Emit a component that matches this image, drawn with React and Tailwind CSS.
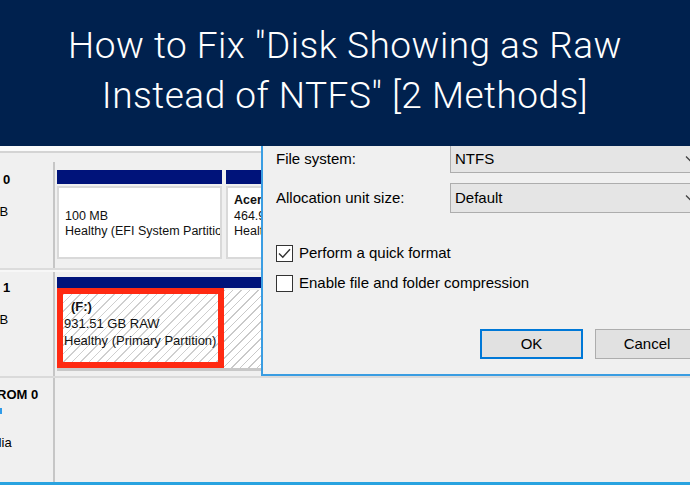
const hatch =
  "bg-[repeating-linear-gradient(135deg,#c9c9c9_0px,#c9c9c9_1px,#ffffff_1px,#ffffff_6px)]";

function DiskLabel({ lines, pt = 10 }) {
  return (
    <div
      className="w-[55px] shrink-0 overflow-hidden border-r-2 border-[#c6c6c6] bg-[#f0f0f0] text-[13px] leading-[16px] text-black"
      style={{ paddingTop: pt }}
    >
      {lines.map((l, i) => (
        <div
          key={i}
          className={`whitespace-nowrap ${l.bold ? "font-bold" : ""}`}
          style={{ marginLeft: l.ml }}
        >
          {l.text || "\u00a0"}
        </div>
      ))}
    </div>
  );
}

function Partition({ width, lines, extra = "" }) {
  return (
    <div className="flex flex-col shrink-0" style={{ width }}>
      <div className="h-[14px] bg-[#00137a]" />
      <div
        className={`mt-[2px] h-[73px] border-2 border-[#d9d9d9] bg-white pl-[6px] pt-[5px] text-[12.5px] leading-[15.5px] text-[#111] whitespace-nowrap overflow-hidden ${extra}`}
      >
        {lines.map((l, i) => (
          <div key={i} className={l.bold ? "font-bold" : ""}>
            {l.text || "\u00a0"}
          </div>
        ))}
      </div>
    </div>
  );
}

function DiskPane() {
  return (
    <div className="w-[261px] shrink-0 overflow-hidden flex flex-col bg-[#f0f0f0]">
      <div className="h-[5px] bg-[#fbfbfb]" />
      <div className="h-[2px] bg-[#d4d4d4]" />
      <div className="h-[9px] bg-[#f0f0f0]" />

      {/* Disk 0 */}
      <div className="flex h-[106px]">
        <DiskLabel
          lines={[
            { text: "Disk 0", bold: true, ml: -28 },
            { text: "Basic", ml: -45 },
            { text: "465.76 GB", ml: -54 },
            { text: "Online", ml: -60 },
          ]}
        />
        <div className="flex gap-[4px] pl-[2px] pt-[8px]">
          <Partition
            width={165}
            lines={[
              { text: "" },
              { text: "100 MB" },
              { text: "Healthy (EFI System Partition)" },
            ]}
          />
          <Partition
            width={80}
            lines={[
              { text: "Acer (C:)", bold: true },
              { text: "464.95 GB NTFS" },
              { text: "Healthy (Boot, Page File)" },
            ]}
          />
        </div>
      </div>

      <div className="h-[2px] bg-[#dcdcdc]" />
      <div className="h-[2px] bg-[#f7f7f7]" />

      {/* Disk 1 */}
      <div className="flex flex-1">
        <DiskLabel
          pt={8}
          lines={[
            { text: "Disk 1", bold: true, ml: -28 },
            { text: "Basic", ml: -45 },
            { text: "931.51 GB", ml: -54 },
            { text: "Online", ml: -60 },
          ]}
        />
        <div className="flex flex-col pl-[2px] pt-[5px] w-[206px]">
          <div className="h-[11px] bg-[#00137a]" />
          <div className="flex h-[80px]">
            <div className="w-[167px] shrink-0 border-[6px] border-[#ff2a12] bg-[repeating-linear-gradient(135deg,#cfcfcf_0px,#cfcfcf_1px,#ffffff_1px,#ffffff_6px)] pl-[1px] pt-[4px] text-[13px] leading-[17px] text-[#111] whitespace-nowrap overflow-hidden">
              <div className="pl-[7px] font-bold">(F:)</div>
              <div>931.51 GB RAW</div>
              <div>Healthy (Primary Partition)</div>
            </div>
            <div className={`flex-1 mt-[2px] ${hatch}`} />
          </div>
          <div className="h-[3px] bg-[#c8c8c8]" />
        </div>
      </div>
    </div>
  );
}

function Chevron() {
  return (
    <svg width="12" height="8" viewBox="0 0 12 8" className="shrink-0">
      <path d="M1 1.5 L6 6.5 L11 1.5" fill="none" stroke="#444" strokeWidth="1.3" />
    </svg>
  );
}

function Select({ value, h, top = true }) {
  return (
    <div
      className={`flex-1 mr-[-14px] flex items-center justify-between bg-[#e5e5e5] border border-[#adadad] pl-[4px] pr-[6px] text-[15px] text-black ${
        top ? "" : "border-t-0"
      }`}
      style={{ height: h }}
    >
      <span>{value}</span>
      <Chevron />
    </div>
  );
}

function Checkbox({ checked, label }) {
  return (
    <div className="flex items-center gap-[6px] h-[17px]">
      <div className="w-[17px] h-[17px] border border-[#333] bg-white flex items-center justify-center">
        {checked && (
          <svg width="13" height="11" viewBox="0 0 13 11">
            <path d="M1 5.5 L4.8 9.2 L12 1.2" fill="none" stroke="#333" strokeWidth="1.4" />
          </svg>
        )}
      </div>
      <span className="text-[15px] text-black">{label}</span>
    </div>
  );
}

function FormatDialog() {
  return (
    <div className="flex-1 overflow-hidden border-l-2 border-b-2 border-[#3a9de2] bg-[#f0f0f0] flex flex-col pl-[13px]">
      <div className="flex items-center">
        <div className="w-[174px] text-[15px] text-black">File system:</div>
        <Select value="NTFS" h={27} top={false} />
      </div>
      <div className="flex items-center mt-[10px]">
        <div className="w-[174px] text-[15px] text-black">Allocation unit size:</div>
        <Select value="Default" h={30} />
      </div>
      <div className="mt-[32px] flex flex-col gap-[13px]">
        <Checkbox checked label="Perform a quick format" />
        <Checkbox label="Enable file and folder compression" />
      </div>
      <div className="mt-[37px] flex gap-[12px] pl-[204px]">
        <button className="w-[103px] h-[30px] shrink-0 border-2 border-[#0078d7] bg-[#e1e1e1] text-[15px] text-black">
          OK
        </button>
        <button className="w-[104px] h-[30px] shrink-0 border border-[#adadad] bg-[#e1e1e1] text-[15px] text-black">
          Cancel
        </button>
      </div>
    </div>
  );
}

export default function App() {
  return (
    <div className="w-[690px] h-[485px] overflow-hidden bg-[#f0f0f0] flex flex-col font-['Liberation_Sans',Arial,sans-serif]">
      <header className="h-[146px] shrink-0 bg-[#00214e] flex items-center justify-center pb-[4px]">
        <h1 className="text-center text-white text-[37px] leading-[50px] font-light font-['Roboto',sans-serif] tracking-[0.5px]">
          How to Fix "Disk Showing as Raw
          <br />
          Instead of NTFS" [2 Methods]
        </h1>
      </header>

      <div className="flex h-[230px] shrink-0">
        <DiskPane />
        <FormatDialog />
      </div>

      <div className="h-[2px] bg-[#dadada]" />

      {/* CD-ROM row */}
      <div className="flex flex-1">
        <div className="w-[55px] shrink-0 overflow-hidden border-r-2 border-[#c6c6c6] pt-[9px] text-[13px] leading-[16px] text-black">
          <div className="whitespace-nowrap font-bold ml-[-26px]">CD-ROM 0</div>
          <div className="h-[16px] flex items-center">
            <div className="w-[2px] h-[6px] bg-[#2f9be8]" />
          </div>
          <div>&nbsp;</div>
          <div className="whitespace-nowrap ml-[-44px]">No Media</div>
        </div>
        <div className="flex-1" />
      </div>
      <div className="h-[3px] bg-[#29a3e0]" />
    </div>
  );
}
